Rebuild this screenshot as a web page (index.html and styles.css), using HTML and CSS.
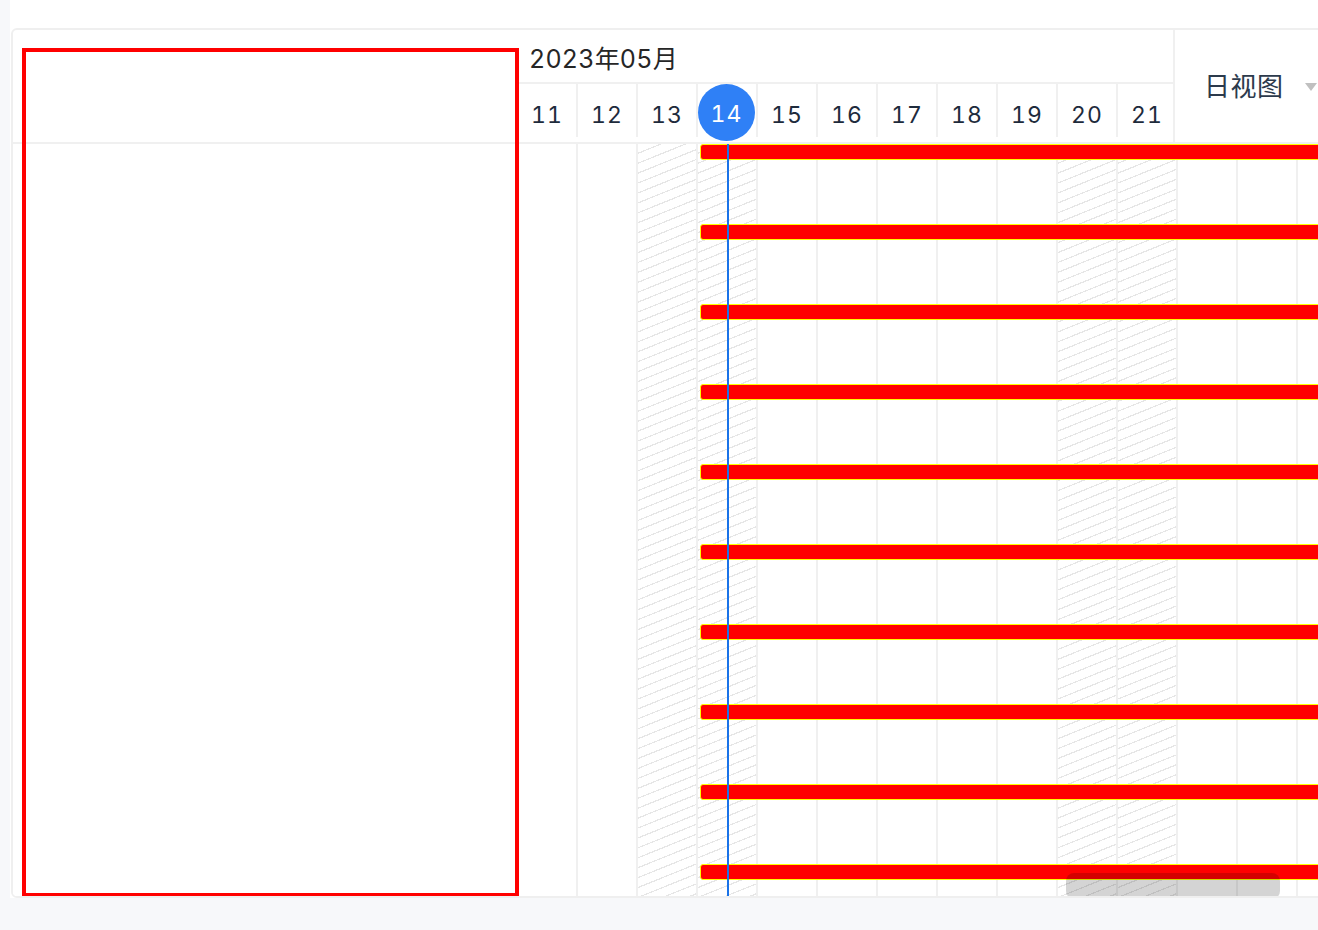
FILE: index.html
```html
<!DOCTYPE html>
<html lang="zh-CN">
<head>
<meta charset="utf-8">
<title>Gantt</title>
<link rel="stylesheet" href="styles.css">
</head>
<body>
<div class="page">
  <div class="card">
    <div class="left-head"></div>
    <div class="tl-head">
      <div class="month">2023年05月</div>
      <div class="days">
        <div class="day">11</div>
        <div class="day">12</div>
        <div class="day">13</div>
        <div class="day today"><span class="today-dot">14</span></div>
        <div class="day">15</div>
        <div class="day">16</div>
        <div class="day">17</div>
        <div class="day">18</div>
        <div class="day">19</div>
        <div class="day">20</div>
        <div class="day">21</div>
        <div class="day">22</div>
        <div class="day">23</div>
        <div class="day">24</div>
      </div>
    </div>
    <div class="left-body"></div>
    <div class="tl-body">
      <div class="cols">
        <div class="col"></div>
        <div class="col"></div>
        <div class="col weekend"></div>
        <div class="col weekend today-col"></div>
        <div class="col"></div>
        <div class="col"></div>
        <div class="col"></div>
        <div class="col"></div>
        <div class="col"></div>
        <div class="col weekend"></div>
        <div class="col weekend"></div>
        <div class="col"></div>
        <div class="col"></div>
        <div class="col"></div>
      </div>
      <div class="rows">
        <div class="row"><div class="bar"></div></div>
        <div class="row"><div class="bar"></div></div>
        <div class="row"><div class="bar"></div></div>
        <div class="row"><div class="bar"></div></div>
        <div class="row"><div class="bar"></div></div>
        <div class="row"><div class="bar"></div></div>
        <div class="row"><div class="bar"></div></div>
        <div class="row"><div class="bar"></div></div>
        <div class="row"><div class="bar"></div></div>
        <div class="row"><div class="bar"></div></div>
      </div>
    </div>
    <div class="view-switch"><span class="view-label">日视图</span><span class="caret"></span></div>
    <div class="highlight"></div>
    <div class="scrollbar"></div>
  </div>
</div>
</body>
</html>
```
FILE: styles.css
```css
html, body {
  margin: 0;
  padding: 0;
}
body {
  background: #f7f8fa;
  width: 1318px;
  height: 930px;
  overflow: hidden;
  font-family: "Inter", "Noto Sans CJK SC", sans-serif;
}
.page {
  margin-left: 10px;
  padding-left: 1px;
  padding-top: 28px;
  background: #ffffff;
  height: 870px;
  overflow: hidden;
}
.card {
  position: relative;
  width: 1420px;
  height: 870px;
  box-sizing: border-box;
  border: 2px solid #efefef;
  border-radius: 6px;
  background: #fff;
  display: grid;
  grid-template-columns: 505px 1fr;
  grid-template-rows: 114px 1fr;
  overflow: hidden;
}
.left-head {
  border-bottom: 2px solid #f0f0f0;
}
.tl-head {
  border-bottom: 2px solid #f0f0f0;
  display: flex;
  flex-direction: column;
}
.month {
  height: 54px;
  border-bottom: 2px solid #f0f0f0;
  display: flex;
  align-items: center;
  padding-left: 11px;
  padding-top: 2px;
  box-sizing: border-box;
  font-size: 25px;
  letter-spacing: 0.2px;
  font-feature-settings: "tnum";
  color: #262626;
  white-space: nowrap;
}
.days {
  display: flex;
  height: 56px;
  align-items: flex-start;
}
.day {
  flex: 0 0 60px;
  width: 60px;
  height: 53px;
  box-sizing: border-box;
  border-right: 2px solid #f0f0f0;
  display: flex;
  align-items: center;
  justify-content: center;
  padding-top: 8px;
  font-size: 23px;
  letter-spacing: 1px;
  font-feature-settings: "tnum";
  color: #1e2b3c;
}
.day.today {
  position: relative;
}
.today-dot {
  position: absolute;
  left: 0;
  top: 0;
  width: 57px;
  height: 57px;
  border-radius: 50%;
  background: #2f80f6;
  color: #fff;
  display: flex;
  align-items: center;
  justify-content: center;
  padding-top: 3px;
  box-sizing: border-box;
}
.left-body {
  background: #fff;
}
.tl-body {
  display: grid;
  overflow: hidden;
}
.cols, .rows {
  grid-area: 1 / 1;
}
.cols {
  display: flex;
}
.col {
  flex: 0 0 60px;
  box-sizing: border-box;
  border-right: 2px solid #f0f0f0;
}
.col.weekend {
  background: repeating-linear-gradient(158deg, transparent 0, transparent 8px, #e6e6e6 8px, #e6e6e6 9.2px);
}
.today-col {
  position: relative;
}
.today-col::after {
  content: "";
  position: absolute;
  left: 29px;
  top: 0;
  bottom: 0;
  width: 2px;
  background: #1a73e8;
  z-index: 2;
}
.rows {
  position: relative;
  z-index: 1;
  display: flex;
  flex-direction: column;
}
.row {
  flex: 0 0 80px;
  height: 80px;
}
.bar {
  margin-left: 182px;
  height: 16px;
  box-sizing: border-box;
  background: #ff0000;
  border: 1.5px solid #ffff00;
  border-radius: 3px 0 0 3px;
}
.view-switch {
  position: absolute;
  left: 1160px;
  top: 0;
  width: 240px;
  height: 112px;
  box-sizing: border-box;
  border-left: 2px solid #f0f0f0;
  background: #fff;
  display: flex;
  align-items: center;
  padding-left: 29px;
  padding-bottom: 3px;
  z-index: 3;
}
.view-label {
  font-size: 26px;
  letter-spacing: 0.5px;
  color: #2c3a4c;
  font-family: "Noto Sans CJK SC", sans-serif;
}
.caret {
  margin-left: 21px;
  margin-top: 4px;
  width: 0;
  height: 0;
  border-left: 6.5px solid transparent;
  border-right: 6.5px solid transparent;
  border-top: 8px solid #c0c0c0;
}
.highlight {
  position: absolute;
  left: 9px;
  top: 18px;
  width: 497px;
  height: 849px;
  box-sizing: border-box;
  border: 4px solid #ff0000;
  z-index: 4;
}
.scrollbar {
  position: absolute;
  left: 1053px;
  top: 843px;
  width: 214px;
  height: 26px;
  border-radius: 8px;
  background: rgba(0, 0, 0, 0.17);
  z-index: 5;
}
```
